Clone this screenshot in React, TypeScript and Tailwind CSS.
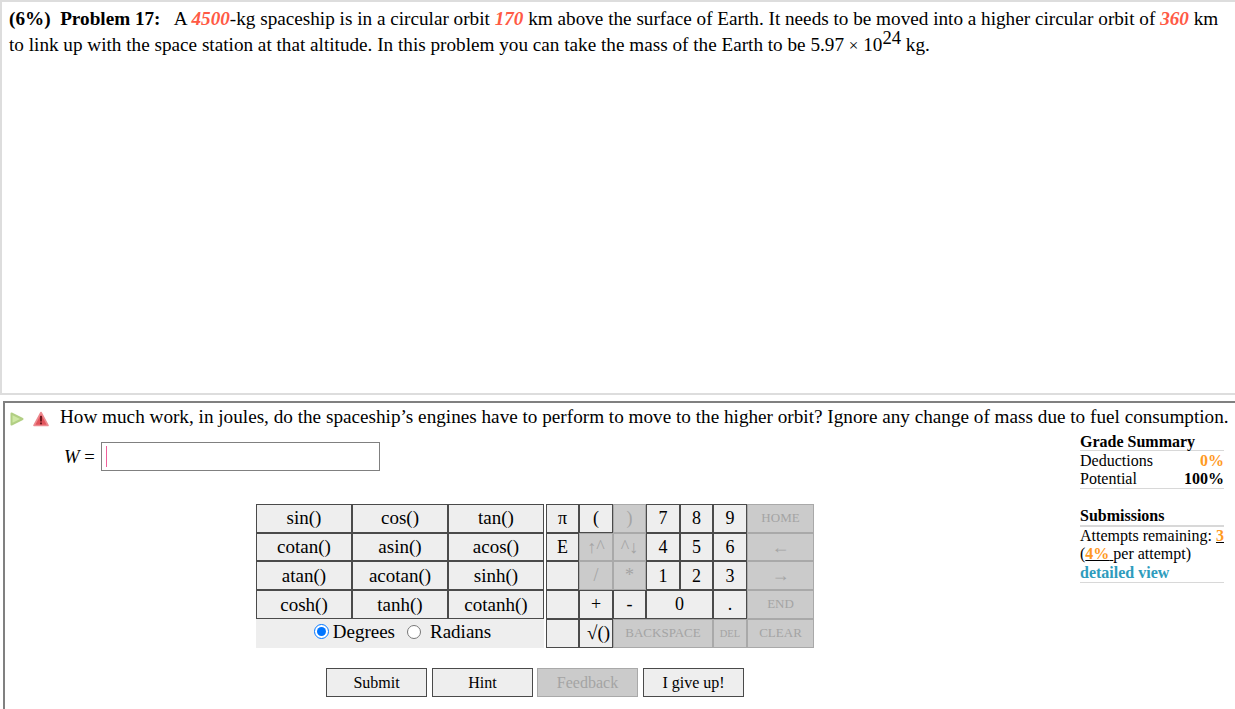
import React from "react";

const fnRows = [
  ["sin()", "cos()", "tan()"],
  ["cotan()", "asin()", "acos()"],
  ["atan()", "acotan()", "sinh()"],
  ["cosh()", "tanh()", "cotanh()"],
];

function Btn({ children, off, className = "" }: { children?: React.ReactNode; off?: boolean; className?: string }) {
  return (
    <div
      className={
        "flex items-center justify-center border box-border whitespace-nowrap " +
        (off
          ? "bg-[#cbcbcb] border-[#a9a9a9] text-[#a4a4a4] "
          : "bg-[#eeeeee] border-[#4a4a4a] text-black ") +
        className
      }
    >
      {children}
    </div>
  );
}

export default function App() {
  return (
    <div className="w-[1235px] h-[709px] overflow-hidden bg-white text-black font-['Liberation_Serif',serif]">
      <div className="h-[395px] border-t-2 border-l-2 border-b-2 border-[#dddddd] box-border pl-[7px] pt-[4px] text-[19.2px] leading-[26px] whitespace-nowrap">
        <div>
          <b>(6%)&nbsp; Problem 17:</b>&nbsp;&nbsp; A <b className="italic text-[#ff5a45]">4500</b>-kg spaceship is in a circular orbit <b className="italic text-[#ff5a45]">170</b> km above the surface of Earth. It needs to be moved into a higher circular orbit of <b className="italic text-[#ff5a45]">360</b> km
        </div>
        <div>
          to link up with the space station at that altitude. In this problem you can take the mass of the Earth to be 5.97 <span className="text-[17px]">×</span> 10<sup className="text-[18.67px] leading-none top-[-7px] align-baseline relative">24</sup> kg.
        </div>
      </div>

      <div className="mt-[6px] ml-[3px] h-[320px] border-t-2 border-l-2 border-[#808080] box-border">
        <div className="flex items-center h-[30px] text-[19.2px] whitespace-nowrap">
          <svg width="14" height="14" viewBox="0 0 14 14" className="ml-[5px] mt-[1px]">
            <path d="M1.5 1.5 L12.5 7 L1.5 12.5 Z" fill="#cfe8a4" stroke="#b2cf84" strokeWidth="2" strokeLinejoin="round" />
          </svg>
          <svg width="16" height="16" viewBox="0 0 16 16" className="ml-[9px] mt-[1px]">
            <path d="M8 1.5 L15 14.5 L1 14.5 Z" fill="#e2545c" stroke="#ec8a90" strokeWidth="1.6" strokeLinejoin="round" />
            <path d="M8 5 V10.5" stroke="#6e1a20" strokeWidth="2" />
            <rect x="7" y="11.5" width="2" height="1.8" fill="#6e1a20" />
          </svg>
          <span className="ml-[11px] mb-[1px]">How much work, in joules, do the spaceship’s engines have to perform to move to the higher orbit? Ignore any change of mass due to fuel consumption.</span>
        </div>

        <div className="flex">
          <div className="w-[1075px]">
            <div className="flex items-center mt-[9px] h-[29px] pl-[59px]">
              <span className="text-[18.67px] w-[37px] whitespace-nowrap"><i>W</i> =</span>
              <div className="w-[279px] h-[29px] border border-[#808080] box-border flex items-center pl-[4px]">
                <div className="w-px h-[21px] bg-[#f0609a]" />
              </div>
            </div>

            <div className="flex mt-[33px] ml-[251px]">
              <div className="w-[288px] shrink-0">
                <div className="grid grid-cols-[96px_96px_96px] grid-rows-[29px_28px_29px_29px]">
                  {fnRows.map((row, r) =>
                    row.map((t) => (
                      <Btn key={t} className={r >= 2 ? "text-[19px] pt-[2px]" : "text-[19px]"}>{t}</Btn>
                    ))
                  )}
                </div>
                <div className="h-[29px] bg-[#eeeeee] flex items-center justify-center text-[19px] pl-[5px] pb-[2px]">
                  <input type="radio" name="unit" defaultChecked className="w-[15px] h-[15px] m-0 mb-[2px] accent-[#0075ff]" />
                  <span className="ml-[4px]">Degrees</span>
                  <input type="radio" name="unit" className="w-[14px] h-[14px] m-0 mb-[2px] ml-[12px]" />
                  <span className="ml-[9px]">Radians</span>
                </div>
              </div>
              <div className="ml-[2px] grid grid-cols-[33px_34px_33px_34px_33px_34px_67px] grid-rows-[29px_28px_29px_29px_29px] text-[18px]">
                <Btn>π</Btn><Btn>(</Btn><Btn off>)</Btn><Btn>7</Btn><Btn>8</Btn><Btn>9</Btn><Btn off className="text-[13px] pb-[2px]">HOME</Btn>
                <Btn>E</Btn><Btn off>↑^</Btn><Btn off>^↓</Btn><Btn>4</Btn><Btn>5</Btn><Btn>6</Btn><Btn off>←</Btn>
                <Btn /><Btn off>/</Btn><Btn off>*</Btn><Btn className="pt-[2px]">1</Btn><Btn className="pt-[2px]">2</Btn><Btn className="pt-[2px]">3</Btn><Btn off>→</Btn>
                <Btn /><Btn>+</Btn><Btn>-</Btn><Btn className="col-span-2">0</Btn><Btn>.</Btn><Btn off className="text-[13px] pb-[2px]">END</Btn>
                <Btn /><Btn className="text-[19px] pl-[5px]">√()</Btn><Btn off className="col-span-3 text-[13px] pb-[2px]">BACKSPACE</Btn><Btn off className="text-[10.5px]">DEL</Btn><Btn off className="text-[13px] pb-[2px]">CLEAR</Btn>
              </div>
            </div>

            <div className="flex mt-[20px] ml-[321px] text-[16px]">
              <Btn className="w-[101px] h-[29px]">Submit</Btn>
              <Btn className="w-[101px] h-[29px] ml-[5px]">Hint</Btn>
              <Btn off className="w-[101px] h-[29px] ml-[4px]">Feedback</Btn>
              <Btn className="w-[101px] h-[29px] ml-[5px]">I give up!</Btn>
            </div>
          </div>

          <div className="w-[144px] text-[16px] leading-[18px] whitespace-nowrap">
            <div className="font-bold border-b border-[#d8d8d8] h-[18px] leading-[17px]">Grade Summary</div>
            <div className="flex justify-between mt-px"><span>Deductions</span><b className="text-[#ff9a1f]">0%</b></div>
            <div className="flex justify-between border-b border-[#d8d8d8] h-[19px]"><span>Potential</span><b>100%</b></div>
            <div className="font-bold border-b-2 border-[#d8d8d8] mt-[18px] h-[20px]">Submissions</div>
            <div>Attempts remaining: <b className="text-[#ff9a1f] underline decoration-black">3</b></div>
            <div>(<b className="text-[#ff9a1f] underline decoration-black">4%</b><span className="underline"> </span>per attempt)</div>
            <div className="font-bold text-[#2e9cbd] border-b border-[#d8d8d8] h-[19px] mt-px">detailed view</div>
          </div>
        </div>
      </div>
    </div>
  );
}
